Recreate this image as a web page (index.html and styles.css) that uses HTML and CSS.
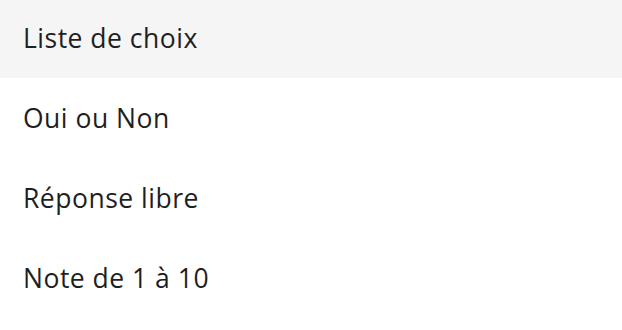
FILE: index.html
```html
<!DOCTYPE html>
<html lang="fr">
<head>
    <meta charset="UTF-8">
    <meta name="viewport" content="width=device-width, initial-scale=1.0">
    <title>Type de question</title>
    <link rel="stylesheet" href="styles.css">
</head>
<body>

<ul class="choice-list">
    <li class="choice active">Liste de choix</li>
    <li class="choice">Oui ou Non</li>
    <li class="choice">Réponse libre</li>
    <li class="choice">Note de 1 à 10</li>
</ul>

</body>
</html>
```

FILE: styles.css
```css
body {
    font-family: "Open Sans", sans-serif;
    margin: 0;
    padding: 0;
    background-color: #ffffff;
}
.choice-list {
    list-style: none;
    margin: 0;
    padding: 0;
    display: flex;
    flex-direction: column;
    gap: 2px;
}
.choice {
    box-sizing: border-box;
    height: 78px;
    display: flex;
    align-items: center;
    padding: 0 0 3px 23px;
    font-size: 26.5px;
    font-weight: 500;
    letter-spacing: 0.5px;
    color: #1f1f1f;
}
.choice.active {
    background-color: #f5f5f5;
}
```
